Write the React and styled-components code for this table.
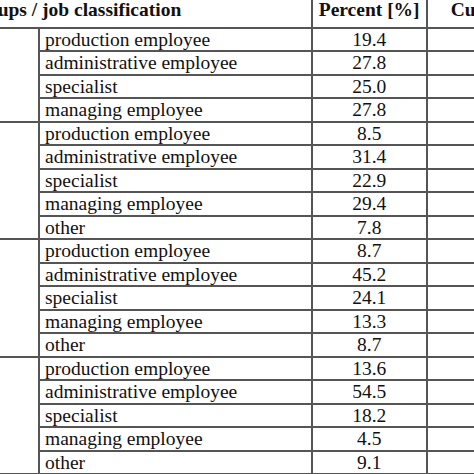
import React from 'react';
import styled, { createGlobalStyle } from 'styled-components';

const GlobalStyle = createGlobalStyle`
  html, body {
    margin: 0;
    padding: 0;
    background: #fff;
    overflow: hidden;
  }
  body {
    width: 474px;
    height: 474px;
  }
`;

const Page = styled.div`
  width: 474px;
  height: 474px;
  overflow: hidden;
  background: #fff;
`;

const Table = styled.table`
  border-collapse: collapse;
  table-layout: fixed;
  width: 843px;
  margin: -9px 0 0 -167px;
  font-family: 'Liberation Serif', 'Times New Roman', serif;
  font-size: 19.5px;
  color: #111;
`;

const Th = styled.th`
  border: 2px solid #555;
  padding: 6px 6px 6.4px;
  line-height: 21.5px;
  font-weight: bold;
  text-align: center;
  white-space: nowrap;
`;

const Td = styled.td`
  border: 2px solid #555;
  height: 21.5px;
  padding: 0 6px 0 ${(p) => (p.$left ? '5.5px' : '6px')};
  line-height: 21.5px;
  text-align: ${(p) => (p.$left ? 'left' : 'center')};
  white-space: nowrap;
`;

const groups = [
  {
    label: 'small',
    rows: [
      ['production employee', '19.4', '19.4'],
      ['administrative employee', '27.8', '47.2'],
      ['specialist', '25.0', '72.2'],
      ['managing employee', '27.8', '100.0'],
    ],
  },
  {
    label: 'medium',
    rows: [
      ['production employee', '8.5', '8.5'],
      ['administrative employee', '31.4', '39.9'],
      ['specialist', '22.9', '62.8'],
      ['managing employee', '29.4', '92.2'],
      ['other', '7.8', '100.0'],
    ],
  },
  {
    label: 'large',
    rows: [
      ['production employee', '8.7', '8.7'],
      ['administrative employee', '45.2', '53.9'],
      ['specialist', '24.1', '78.0'],
      ['managing employee', '13.3', '91.3'],
      ['other', '8.7', '100.0'],
    ],
  },
  {
    label: 'very large',
    rows: [
      ['production employee', '13.6', '13.6'],
      ['administrative employee', '54.5', '68.1'],
      ['specialist', '18.2', '86.3'],
      ['managing employee', '4.5', '90.8'],
      ['other', '9.1', '100.0'],
    ],
  },
];

export default function App() {
  return (
    <Page>
      <GlobalStyle />
      <Table>
        <colgroup>
          <col style={{ width: 204.5 }} />
          <col style={{ width: 273.2 }} />
          <col style={{ width: 115 }} />
          <col style={{ width: 250.3 }} />
        </colgroup>
        <thead>
          <tr>
            <Th colSpan={2}>Groups / job classification</Th>
            <Th>Percent [%]</Th>
            <Th>Cumulative percent [%]</Th>
          </tr>
        </thead>
        <tbody>
          {groups.map((g) =>
            g.rows.map((r, i) => (
              <tr key={g.label + i}>
                {i === 0 && (
                  <Td $left rowSpan={g.rows.length}>
                    {g.label}
                  </Td>
                )}
                <Td $left>{r[0]}</Td>
                <Td>{r[1]}</Td>
                <Td>{r[2]}</Td>
              </tr>
            ))
          )}
        </tbody>
      </Table>
    </Page>
  );
}
